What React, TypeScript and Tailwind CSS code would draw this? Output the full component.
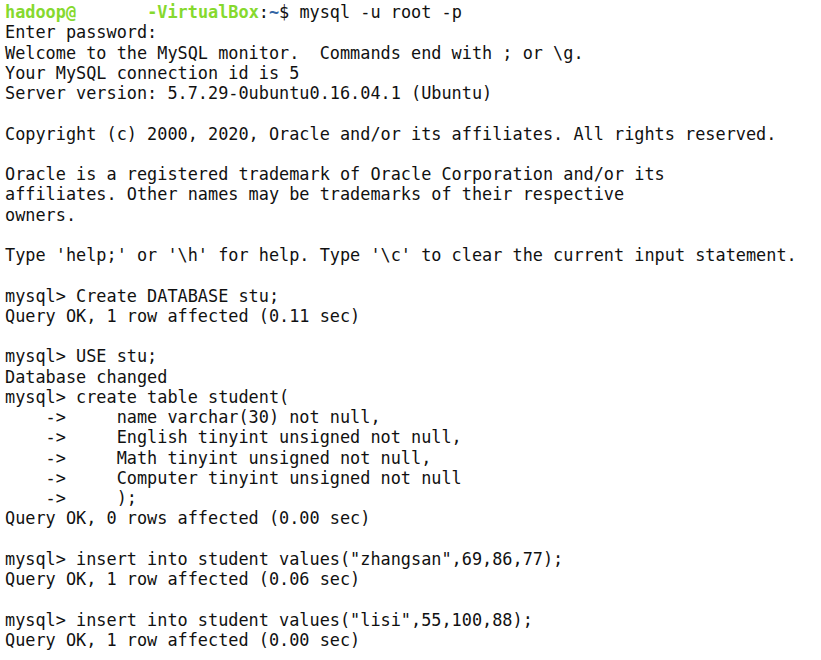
import React from 'react';

const lines: string[] = [
  'Enter password:',
  'Welcome to the MySQL monitor.  Commands end with ; or \\g.',
  'Your MySQL connection id is 5',
  'Server version: 5.7.29-0ubuntu0.16.04.1 (Ubuntu)',
  '',
  'Copyright (c) 2000, 2020, Oracle and/or its affiliates. All rights reserved.',
  '',
  'Oracle is a registered trademark of Oracle Corporation and/or its',
  'affiliates. Other names may be trademarks of their respective',
  'owners.',
  '',
  "Type 'help;' or '\\h' for help. Type '\\c' to clear the current input statement.",
  '',
  'mysql> Create DATABASE stu;',
  'Query OK, 1 row affected (0.11 sec)',
  '',
  'mysql> USE stu;',
  'Database changed',
  'mysql> create table student(',
  '    ->     name varchar(30) not null,',
  '    ->     English tinyint unsigned not null,',
  '    ->     Math tinyint unsigned not null,',
  '    ->     Computer tinyint unsigned not null',
  '    ->     );',
  'Query OK, 0 rows affected (0.00 sec)',
  '',
  'mysql> insert into student values("zhangsan",69,86,77);',
  'Query OK, 1 row affected (0.06 sec)',
  '',
  'mysql> insert into student values("lisi",55,100,88);',
  'Query OK, 1 row affected (0.00 sec)',
];

export default function App() {
  return (
    <div className="w-[821px] h-[660px] bg-white overflow-hidden pl-[5px] pt-[2px] font-['DejaVu_Sans_Mono',monospace] text-[16.87px] leading-[20.25px] text-[#111] whitespace-pre">
      <div className="h-[20.25px]">
        <span className="font-bold text-[#86d92e]">hadoop@</span>
        <span>{'       '}</span>
        <span className="font-bold text-[#86d92e]">-VirtualBox</span>
        <span>:</span>
        <span className="font-bold text-[#3465a4]">~</span>
        <span>$ mysql -u root -p</span>
      </div>
      {lines.map((line, i) => (
        <div key={i} className="h-[20.25px]">{line}</div>
      ))}
    </div>
  );
}
